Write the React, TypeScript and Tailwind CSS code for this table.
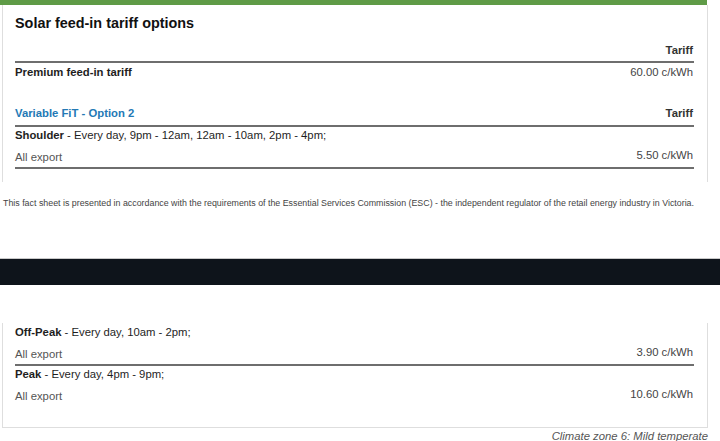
import React from 'react';

const font = { fontFamily: '"Liberation Sans", Arial, sans-serif' };

type Band = { name: string; when: string; rate: string };

const Rule: React.FC = () => <div className="h-[2px] bg-[#6e6e6e] mr-[13px]" />;

const BandRows: React.FC<{ band: Band; last?: boolean }> = ({ band, last }) => (
    <div>
        <div className="h-[17px] flex items-center text-[11.3px] text-[#1e1e1e]">
            <span className="font-bold">{band.name}</span>
            <span>&nbsp;- {band.when}</span>
        </div>
        <div className="h-[23px] flex items-center justify-between pr-[14px] text-[11.3px] text-[#555]">
            <span className="pt-[3px]">All export</span>
            <span className="text-[#444]">{band.rate}</span>
        </div>
        {!last && <Rule />}
    </div>
);

export default function App() {
    return (
        <div className="w-[720px] h-[441px] bg-white overflow-hidden" style={font}>
            {/* Top card */}
            <div className="w-[707px] h-[5px] bg-[#5f9b47]" />
            <div className="ml-[2px] w-[706px] h-[177px] border-x border-[#dedede] pl-[12px]">
                <div className="h-[34px] pt-[4px] flex items-center text-[14.4px] font-bold text-[#111]">
                    Solar feed-in tariff options
                </div>
                <div className="h-[22px] flex items-center justify-end pr-[14px] text-[11.3px] font-bold text-[#333]">
                    Tariff
                </div>
                <Rule />
                <div className="h-[18px] flex items-center justify-between pr-[14px] text-[11.3px]">
                    <span className="font-bold text-[#1e1e1e]">Premium feed-in tariff</span>
                    <span className="text-[#444]">60.00 c/kWh</span>
                </div>
                <div className="h-[21px]" />
                <div className="h-[23px] flex items-center justify-between pr-[14px] text-[11.3px] font-bold">
                    <span className="text-[#2479b5]">Variable FiT - Option 2</span>
                    <span className="text-[#333]">Tariff</span>
                </div>
                <Rule />
                <BandRows band={{ name: 'Shoulder', when: 'Every day, 9pm - 12am, 12am - 10am, 2pm - 4pm;', rate: '5.50 c/kWh' }} />
            </div>

            {/* Footnote */}
            <div className="h-[44px] flex items-center pl-[3px] text-[8.85px] text-[#444] whitespace-nowrap">
                This fact sheet is presented in accordance with the requirements of the Essential Services Commission (ESC) - the independent regulator of the retail energy industry in Victoria.
            </div>

            {/* Dark band */}
            <div className="mt-[32px] h-[1px] bg-[#c9c9c9]" />
            <div className="h-[26px] bg-[#0e141b]" />

            {/* Continued card */}
            <div className="mt-[38px] ml-[2px] w-[706px] border-x border-b border-[#dedede] pl-[12px] pt-[1px] pb-[21px]">
                <BandRows band={{ name: 'Off-Peak', when: 'Every day, 10am - 2pm;', rate: '3.90 c/kWh' }} />
                <BandRows band={{ name: 'Peak', when: 'Every day, 4pm - 9pm;', rate: '10.60 c/kWh' }} last />
            </div>
            <div className="w-[708px] h-[16px] flex items-center justify-end text-[11.3px] italic text-[#555]">
                Climate zone 6: Mild temperate
            </div>
        </div>
    );
}
